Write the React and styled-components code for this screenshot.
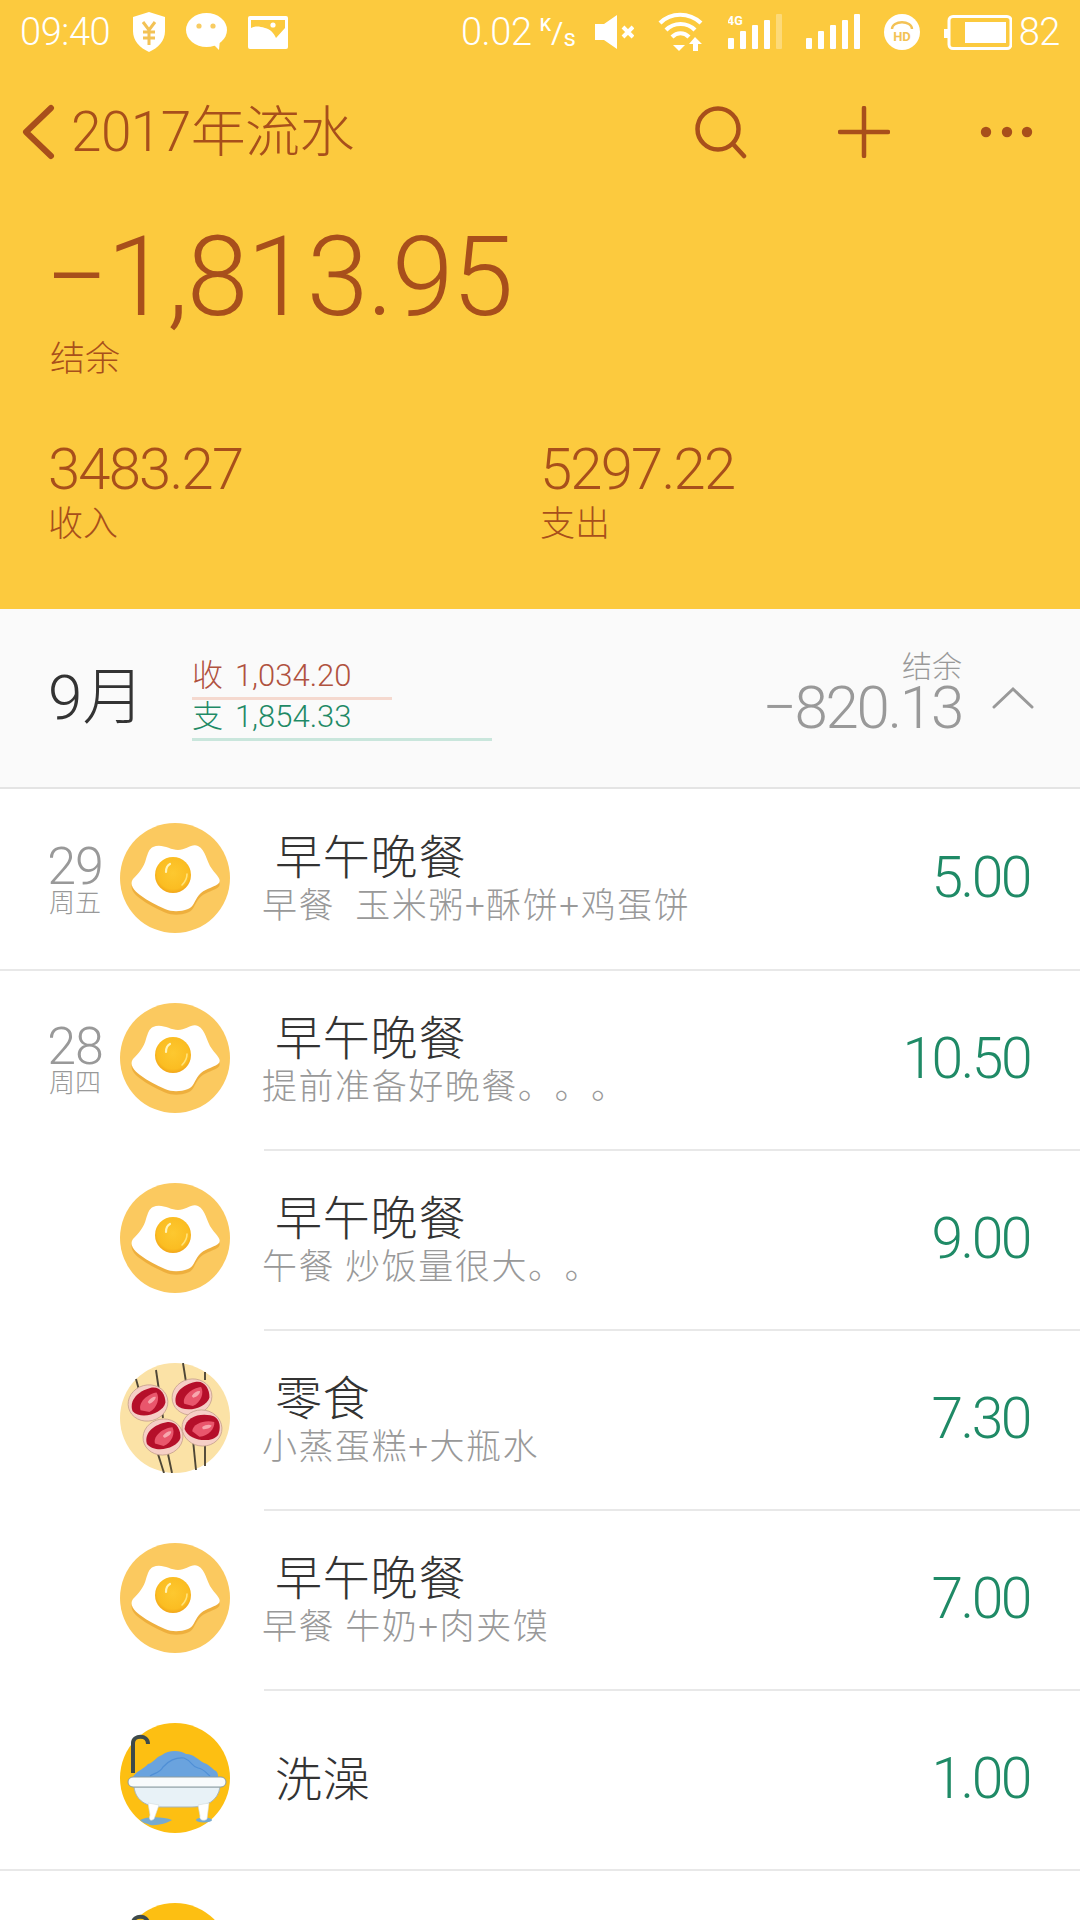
import React from "react";
import styled, { createGlobalStyle } from "styled-components";

const NUM = `Roboto, "Noto Sans CJK SC", sans-serif`;
const BROWN = "#a84f1b";
const GREEN = "#1f8a66";

const Global = createGlobalStyle`
  html, body { margin: 0; padding: 0; background: #fff; height: 1920px; overflow: hidden; }
  * { box-sizing: border-box; }
`;
const Page = styled.div`
  width: 1080px; height: 1920px; overflow: hidden; background: #fff;
  font-family: ${NUM}; font-weight: 300; text-spacing-trim: space-all;
`;
const Header = styled.header`
  height: 609px; background: #fcca3e; display: flex; flex-direction: column; color: ${BROWN};
`;
const StatusBar = styled.div`
  height: 62px; padding: 2px 20px 0 20px; display: flex; align-items: center; color: #fff;
  svg { display: block; flex: none; }
`;
const StatusText = styled.span`
  font-size: 38px; letter-spacing: -0.4px; line-height: 1; margin-right: ${p => p.$mr || 0}px; margin-left: ${p => p.$ml || 0}px;
`;
const Group = styled.div`
  display: flex; align-items: center; gap: ${p => p.$gap || 0}px;
`;
const Spacer = styled.div` flex: 1; `;
const Speed = styled.span`
  display: flex; align-items: center; width: 46px; margin: 0 9px 0 8px; font-weight: 500; line-height: 1; height: 40px;
`;
const SpeedPart = styled.span`
  font-size: ${p => p.$size}px; transform: translateY(${p => p.$y}px); font-weight: ${p => p.$w || 500};
`;
const Toolbar = styled.div`
  height: 100px; margin-top: 20px; padding: 0 46px 0 22px; display: flex; align-items: center;
`;
const Title = styled.h1`
  margin: 0 0 0 15px; font-size: 55px; font-weight: 300; line-height: 1; flex: 1; color: ${BROWN};
  letter-spacing: -0.6px;
`;
const ToolIcons = styled.div`
  display: flex; align-items: center; gap: 90px;
`;
const Balance = styled.div`
  margin: 41px 0 0 45px; font-size: 111px; line-height: 108px; letter-spacing: -1.5px;
`;
const Label = styled.div`
  font-size: 35px; line-height: 40px; margin-top: ${p => p.$mt || 0}px;
`;
const BalanceLabel = styled(Label)`
  margin: 9px 0 0 50px;
`;
const Summary = styled.div`
  display: grid; grid-template-columns: 492px 1fr; padding-left: 47px; margin-top: 58px;
`;
const SummaryValue = styled.div`
  font-size: 58px; line-height: 62px; letter-spacing: -1.8px;
`;
const SummaryCell = styled.div`
  padding-left: 1px;
`;
const Month = styled.section`
  height: 180px; background: #fafafa; border-bottom: 2px solid #e4e4e4; display: flex; align-items: center;
  padding: 0 46px 0 48px;
`;
const MonthName = styled.div`
  width: 144px; font-size: 62px; line-height: 1; color: #333;
`;
const Bars = styled.div`
  width: 320px; display: flex; flex-direction: column; margin-top: 4px;
`;
const BarRow = styled.div`
  font-size: 31px; line-height: 33px; color: ${p => p.$color}; white-space: pre; word-spacing: -1.6px;
  border-bottom: 3px solid ${p => p.$line}; width: ${p => p.$w}px; height: 41px;
`;
const MonthRight = styled.div`
  flex: 1; text-align: right; color: #999; padding-right: 2px; margin-top: -4px;
`;
const MonthLabel = styled.div`
  font-size: 30px; line-height: 30px; margin-bottom: -6px;
`;
const MonthValue = styled.div`
  font-size: 60px; line-height: 64px; letter-spacing: -2.2px;
`;
const Chevron = styled.div`
  margin-left: 28px; svg { display: block; }
`;
const Row = styled.div`
  height: ${p => p.$height || 180}px; display: flex; border-bottom: ${p => p.$full ? "2px solid #e8e8e8" : "none"};
`;
const DateCol = styled.div`
  width: 120px; flex: none; text-align: center; padding: ${p => p.$top}px 4px 0 34px; color: #999;
`;
const Day = styled.div`
  font-size: 52px; line-height: 48px; letter-spacing: -1px;
`;
const Week = styled.div`
  font-size: 26px; line-height: 28px; margin-top: -2px;
`;
const IconWrap = styled.div`
  width: 110px; height: 110px; flex: none; margin-top: ${p => p.$top}px; svg { display: block; }
`;
const Body = styled.div`
  flex: 1; margin-left: 34px; display: flex; align-items: center; justify-content: space-between;
  padding-right: 50px;
  border-bottom: ${p => p.$line ? "2px solid #e8e8e8" : "none"};
`;
const Texts = styled.div`
  display: flex; flex-direction: column;
`;
const ItemTitle = styled.div`
  font-size: 47px; line-height: 54px; color: #333; margin-left: 11px; letter-spacing: 0.8px;
`;
const ItemSub = styled.div`
  font-size: 35px; line-height: 40px; color: #999; letter-spacing: 1.55px; white-space: pre; margin-top: 2px; margin-left: -2px;
`;
const Amount = styled.div`
  font-size: 57px; line-height: 1; color: ${GREEN}; letter-spacing: -2.5px; margin-top: -3px;
`;

let uid = 0;
const Egg = () => {
  const id = `yolk${uid++}`;
  return (
    <svg width="110" height="110" viewBox="0 0 110 110">
      <defs>
        <radialGradient id={id} cx="0.5" cy="0.45" r="0.55">
          <stop offset="0" stopColor="#fdc830" />
          <stop offset="0.8" stopColor="#fbbd22" />
          <stop offset="1" stopColor="#f2a618" />
        </radialGradient>
      </defs>
      <circle cx="55" cy="55" r="55" fill="#fbc95f" />
      <path d="M33 26C42 22 50 29 58 29C66 29 72 22 78 25C86 29 86 40 92 48C96 54 103 59 98 63C92 67 84 68 79 74C74 80 74 86 68 88C60 91 52 91 45 88C36 84 28 80 20 74C14 70 9 63 13 58C19 52 24 46 26 38C28 32 29 28 33 26Z" fill="#eeaf3d" transform="translate(0 1.5)" />
      <path d="M33 24C42 20 50 27 58 27C66 27 72 20 78 23C86 27 86 38 92 46C96 52 103 57 98 61C92 65 84 66 79 72C74 78 74 84 68 86C60 89 52 89 45 86C36 82 28 78 20 72C14 68 9 61 13 56C19 50 24 44 26 36C28 30 29 26 33 24Z" fill="#fff" />
      <circle cx="53" cy="52" r="18" fill={`url(#${id})`} />
      <path d="M46 49C46 45 48 42 50 41" stroke="#fff3b8" strokeWidth="2.2" fill="none" strokeLinecap="round" />
      <path d="M62 62C65 59 67 55 67 51" stroke="#ffe27a" strokeWidth="1.6" fill="none" strokeLinecap="round" />
    </svg>
  );
};

const Skewer = ({ cx, cy, rot }) => (
  <g transform={`translate(${cx} ${cy}) rotate(${rot})`}>
    <ellipse rx="20" ry="18" fill="#f6cfc6" stroke="#c7a28e" strokeWidth="0.8" />
    <path d="M-17 4C-18 -8 -6 -14 6 -14C16 -14 19 -4 17 4C12 14 -11 15 -17 4Z" fill="#b50f2a" />
    <path d="M-9 5C-10 -3 2 -9 11 -8C13 -2 8 7 -1 9Z" fill="#e9566c" />
    <path d="M0 -1C3 -4 7 -5 9 -4C9 -2 5 1 1 1Z" fill="#f7a7ae" />
  </g>
);
const Snack = () => (
  <svg width="110" height="110" viewBox="0 0 110 110">
    <circle cx="55" cy="55" r="55" fill="#fbe2a6" />
    <g stroke="#4e4636" strokeWidth="1.9" fill="none">
      <path d="M16 16L19 27" /><path d="M36 7L43 55" /><path d="M38 91L44 110" /><path d="M48 91L52 110" />
      <path d="M63 0L66 19" /><path d="M85 9L85 17" /><path d="M73 77L76 107" /><path d="M85 81L85 103" />
    </g>
    <Skewer cx={28} cy={40} rot={-15} />
    <Skewer cx={72} cy={34} rot={-12} />
    <Skewer cx={43} cy={74} rot={-10} />
    <Skewer cx={82} cy={65} rot={10} />
  </svg>
);
const Bath = () => (
  <svg width="110" height="110" viewBox="0 0 110 110">
    <circle cx="55" cy="55" r="55" fill="#fdbf12" />
    <path d="M13 50V20C13 12 28 11 28 21" stroke="#3e4a4a" strokeWidth="4" fill="none" />
    <path d="M13 54C16 48 24 46 28 41C33 40 36 34 42 32C48 27 60 27 66 31C74 31 78 37 84 40C90 42 92 46 96 48C98 50 98 52 98 54Z" fill="#6aa3de" />
    <path d="M30 53C34 50 40 50 43 44C48 38 56 34 64 35C72 38 72 44 78 45C84 46 86 50 90 53" stroke="#4f8fd6" strokeWidth="1.2" fill="none" />
    <path d="M14 64C16 80 30 84 42 84H72C86 84 98 78 100 64Z" fill="#e8f2f7" stroke="#a8b4b8" strokeWidth="1" />
    <rect x="8" y="54" width="98" height="10" rx="5" fill="#f8fbfc" stroke="#8b9ca2" strokeWidth="1" />
    <path d="M20 97C28 93 44 94 52 97C46 101 32 104 28 101C24 100 22 99 20 97Z" fill="#76aad0" />
    <ellipse cx="84" cy="97" rx="8" ry="2.5" fill="#76aad0" />
    <path d="M28 80L39 82L34 96C32 98 28 98 30 92Z" fill="#fff" stroke="#d3dcdc" strokeWidth="0.6" />
    <path d="M78 82L89 80L87 96C85 98 79 98 80 93Z" fill="#fff" stroke="#d3dcdc" strokeWidth="0.6" />
  </svg>
);

const Shield = () => (
  <svg width="34" height="40" viewBox="0 0 34 40" fill="#fff">
    <path d="M17 0L33 5V19C33 29 26 36 17 40C8 36 1 29 1 19V5Z" />
    <path d="M11 10L17 18L23 10M11 20H23M11 26H23M17 17V33" stroke="#f3c255" strokeWidth="3" fill="none" />
  </svg>
);
const Chat = () => (
  <svg width="42" height="38" viewBox="0 0 42 38" fill="#fff">
    <ellipse cx="20.5" cy="17" rx="20.5" ry="17" />
    <path d="M26 30L33 37L34 26Z" />
    <circle cx="13" cy="13" r="2.6" fill="#f8cc63" /><circle cx="27" cy="13" r="2.6" fill="#f8cc63" />
  </svg>
);
const Picture = () => (
  <svg width="40" height="33" viewBox="0 0 40 33">
    <rect width="40" height="33" rx="2" fill="#fff" />
    <path d="M3 4H37V12L28 22C26 17 22 13 17 12C11 10 7 10 3 12Z" fill="#fcca3e" />
    <circle cx="25" cy="9" r="2.6" fill="#fff" />
  </svg>
);
const Mute = () => (
  <svg width="39" height="34" viewBox="0 0 39 34" fill="#fff">
    <path d="M0 9H9L22 0V34L9 25H0Z" />
    <path d="M28 12L38 22M38 12L28 22" stroke="#fff" strokeWidth="4" />
  </svg>
);
const Wifi = () => (
  <svg width="46" height="40" viewBox="0 0 46 40" fill="none" stroke="#fff" strokeWidth="4.2">
    <path d="M2 11C13 0 31 0 43 11" /><path d="M8 18C16 10 29 10 37 18" /><path d="M14 25C19 20 26 20 31 25" />
    <path d="M15 33H27L21 39Z" fill="#fff" stroke="none" />
    <path d="M37 25L44 32H40V39H35V32H31Z" fill="#fff" stroke="none" />
  </svg>
);
const Signal = ({ label, dim }) => (
  <svg width="54" height="36" viewBox="0 0 54 36" fill="#fff">
    {label && <text x="-1" y="11" fontSize="12.5" fontWeight="700" fontFamily="Roboto, sans-serif">4G</text>}
    <rect x="0" y="24" width="6" height="11" rx="1" />
    <rect x="12" y="17" width="6" height="18" rx="1" />
    <rect x="24" y="11" width="6" height="24" rx="1" />
    <rect x="36" y="6" width="6" height="29" rx="1" />
    <rect x="48" y="0" width="6" height="35" rx="1" opacity={dim ? 0.3 : 1} />
  </svg>
);
const Hd = () => (
  <svg width="36" height="36" viewBox="0 0 36 36">
    <circle cx="18" cy="18" r="18" fill="#fff" />
    <path d="M8 15C8 6 28 6 28 15" stroke="#f3c255" strokeWidth="2.4" fill="none" />
    <text x="18" y="27" textAnchor="middle" fontSize="13" fontWeight="700" fill="#f3c255" fontFamily="Roboto, sans-serif">HD</text>
  </svg>
);
const Battery = () => (
  <svg width="68" height="35" viewBox="0 0 68 35">
    <rect x="0" y="14" width="4" height="9" fill="#fff" />
    <rect x="5" y="1.5" width="62" height="32" rx="4" fill="none" stroke="#fff" strokeWidth="3" />
    <rect x="21" y="7" width="41" height="21" fill="#fff" />
  </svg>
);

const Back = () => (
  <svg width="34" height="56" viewBox="0 0 34 56" fill="none" stroke={BROWN} strokeWidth="6" strokeLinecap="round" strokeLinejoin="round">
    <path d="M29 4L4 28L29 52" />
  </svg>
);
const Search = () => (
  <svg width="54" height="54" viewBox="0 0 54 54" fill="none" stroke={BROWN} strokeWidth="4.5" strokeLinecap="round">
    <circle cx="24" cy="24" r="20.5" /><path d="M39 39L50 51" />
  </svg>
);
const Plus = () => (
  <svg width="52" height="52" viewBox="0 0 52 52" fill="none" stroke={BROWN} strokeWidth="4.5" strokeLinecap="round">
    <path d="M26 2V50M2 26H50" />
  </svg>
);
const Dots = () => (
  <svg width="54" height="12" viewBox="0 0 54 12" fill={BROWN}>
    <circle cx="6" cy="6" r="5.2" /><circle cx="27" cy="6" r="5.2" /><circle cx="47" cy="6" r="5.2" />
  </svg>
);

const rows = [
  { day: "29", week: "周五", icon: Egg, title: "早午晚餐", sub: "早餐  玉米粥+酥饼+鸡蛋饼", amount: "5.00", full: true, first: true },
  { day: "28", week: "周四", icon: Egg, title: "早午晚餐", sub: "提前准备好晚餐。。。", amount: "10.50", line: true },
  { icon: Egg, title: "早午晚餐", sub: "午餐 炒饭量很大。。", amount: "9.00", line: true },
  { icon: Snack, title: "零食", sub: "小蒸蛋糕+大瓶水", amount: "7.30", line: true },
  { icon: Egg, title: "早午晚餐", sub: "早餐 牛奶+肉夹馍", amount: "7.00", line: true },
  { icon: Bath, title: "洗澡", amount: "1.00", full: true },
];

export default function App() {
  return (
    <Page>
      <Global />
      <Header>
        <StatusBar>
          <StatusText $mr={22}>09:40</StatusText>
          <Group $gap={20}><Shield /><Chat /><Picture /></Group>
          <Spacer />
          <StatusText>0.02</StatusText>
          <Speed>
            <SpeedPart $size={18} $y={-7}>K</SpeedPart>
            <SpeedPart $size={30} $y={1} $w={400}>/</SpeedPart>
            <SpeedPart $size={24} $y={6} $w={400}>s</SpeedPart>
          </Speed>
          <Group $gap={24}>
            <Mute /><Wifi /><Signal label dim /><Signal /><Hd /><Battery />
          </Group>
          <StatusText $ml={7}>82</StatusText>
        </StatusBar>
        <Toolbar>
          <Back />
          <Title>2017年流水</Title>
          <ToolIcons><Search /><Plus /><Dots /></ToolIcons>
        </Toolbar>
        <Balance>−1,813.95</Balance>
        <BalanceLabel>结余</BalanceLabel>
        <Summary>
          <SummaryCell><SummaryValue>3483.27</SummaryValue><Label $mt={5}>收入</Label></SummaryCell>
          <SummaryCell><SummaryValue>5297.22</SummaryValue><Label $mt={5}>支出</Label></SummaryCell>
        </Summary>
      </Header>
      <Month>
        <MonthName>9月</MonthName>
        <Bars>
          <BarRow $color="#b0523f" $line="#f5d9cf" $w={200}>收  1,034.20</BarRow>
          <BarRow $color={GREEN} $line="#c9e6dc" $w={300}>支  1,854.33</BarRow>
        </Bars>
        <MonthRight>
          <MonthLabel>结余</MonthLabel>
          <MonthValue>−820.13</MonthValue>
        </MonthRight>
        <Chevron>
          <svg width="42" height="24" viewBox="0 0 42 24" fill="none" stroke="#999" strokeWidth="3" strokeLinecap="round"><path d="M2 21L21 3L40 21" /></svg>
        </Chevron>
      </Month>
      {rows.map((r, i) => (
        <Row key={i} $full={r.full} $height={r.first ? 182 : 180}>
          <DateCol $top={r.first ? 54 : 52}>
            {r.day && <Day>{r.day}</Day>}
            {r.week && <Week>{r.week}</Week>}
          </DateCol>
          <IconWrap $top={r.first ? 34 : 32}><r.icon /></IconWrap>
          <Body $line={r.line}>
            <Texts>
              <ItemTitle>{r.title}</ItemTitle>
              {r.sub && <ItemSub>{r.sub}</ItemSub>}
            </Texts>
            <Amount>{r.amount}</Amount>
          </Body>
        </Row>
      ))}
      <Row>
        <DateCol $top={0} />
        <IconWrap $top={32}><Bath /></IconWrap>
      </Row>
    </Page>
  );
}
